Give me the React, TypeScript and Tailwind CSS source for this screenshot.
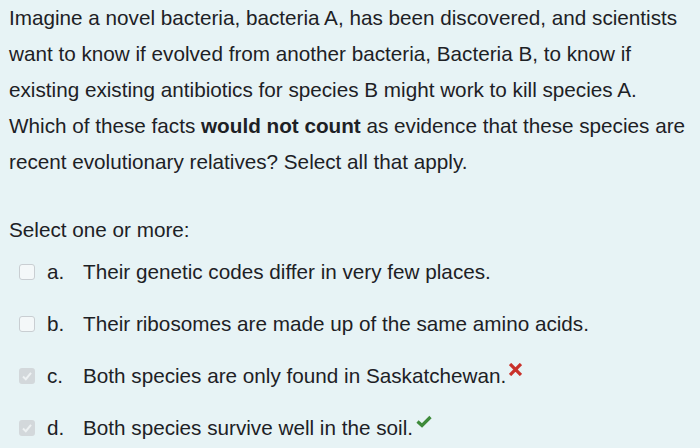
import React from 'react';

type Option = {
  letter: string;
  text: string;
  checked: boolean;
  mark?: 'wrong' | 'right';
};

const options: Option[] = [
  { letter: 'a.', text: 'Their genetic codes differ in very few places.', checked: false },
  { letter: 'b.', text: 'Their ribosomes are made up of the same amino acids.', checked: false },
  { letter: 'c.', text: 'Both species are only found in Saskatchewan.', checked: true, mark: 'wrong' },
  { letter: 'd.', text: 'Both species survive well in the soil.', checked: true, mark: 'right' },
];

function Box({ checked }: { checked: boolean }) {
  if (!checked) {
    return <span className="inline-block w-[16px] h-[16px] rounded-[3px] border border-[#c9ced2] bg-[#f4f8f9]" />;
  }
  return (
    <span className="inline-flex items-center justify-center w-[16px] h-[16px] rounded-[3px] bg-[#d3d8db]">
      <svg width="12" height="12" viewBox="0 0 12 12">
        <path d="M2 6.5 L4.8 9.2 L10 2.8" fill="none" stroke="#eef2f3" strokeWidth="2" />
      </svg>
    </span>
  );
}

function Cross() {
  return (
    <svg width="13" height="13" viewBox="0 0 12 12" className="ml-[3px] -mt-[14px]">
      <path d="M2 2 L10 10 M10 2 L2 10" stroke="#c9312a" strokeWidth="3" strokeLinecap="square" />
    </svg>
  );
}

function Tick() {
  return (
    <svg width="16" height="13" viewBox="0 0 16 12" className="ml-[3px] -mt-[14px]">
      <path d="M1.5 6 L6 10 L14.5 1.5" fill="none" stroke="#3e8b3a" strokeWidth="3.2" />
    </svg>
  );
}

export default function App() {
  return (
    <div
      className="w-[700px] h-[448px] bg-[#e7f3f5] text-[#1d2125] text-[20.7px] overflow-hidden pl-[9px] whitespace-nowrap"
      style={{ fontFamily: '"Liberation Sans", Arial, sans-serif' }}
    >
      <p className="leading-[36px]">
        Imagine a novel bacteria, bacteria A, has been discovered, and scientists
        <br />
        want to know if evolved from another bacteria, Bacteria B, to know if
        <br />
        existing existing antibiotics for species B might work to kill species A.
        <br />
        Which of these facts <b>would not count</b> as evidence that these species are
        <br />
        recent evolutionary relatives? Select all that apply.
      </p>
      <div className="mt-[32px] leading-[36px]">Select one or more:</div>
      <div className="mt-[6px] flex flex-col gap-[16px]">
        {options.map((o) => (
          <div key={o.letter} className="flex items-center h-[36px]">
            <div className="w-[10px]" />
            <Box checked={o.checked} />
            <span className="ml-[12px] w-[36px]">{o.letter}</span>
            <span>{o.text}</span>
            {o.mark === 'wrong' && <Cross />}
            {o.mark === 'right' && <Tick />}
          </div>
        ))}
      </div>
    </div>
  );
}
